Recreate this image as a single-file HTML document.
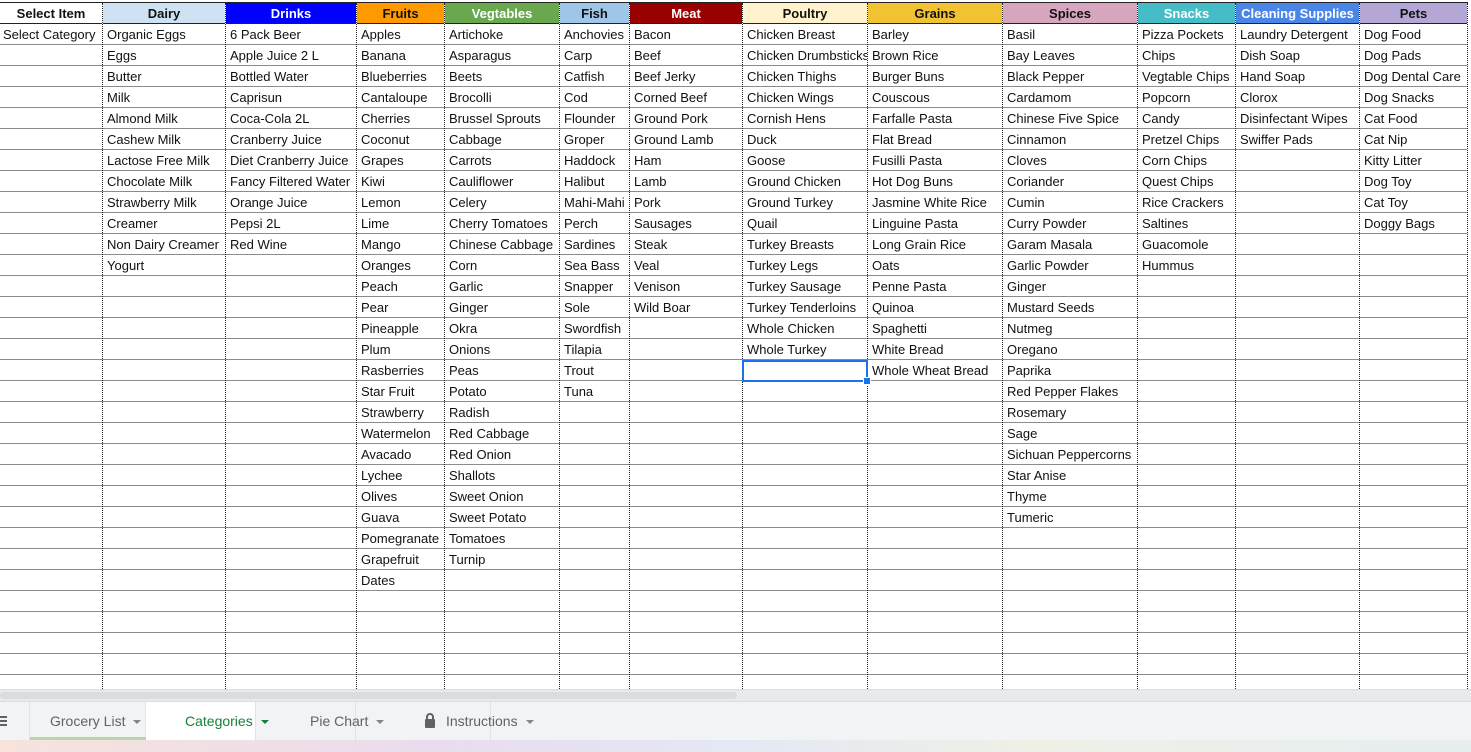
<!DOCTYPE html>
<html><head><meta charset="utf-8"><style>
*{margin:0;padding:0;box-sizing:border-box}
body{width:1471px;height:752px;overflow:hidden;background:#fff;font-family:"Liberation Sans",Arial,sans-serif;font-size:13px;color:#111;position:relative}
#grid{position:absolute;left:0;top:0;width:1471px;height:689px;overflow:hidden}
#rows{position:absolute;left:0;top:24px;width:1467px;height:665px;background:repeating-linear-gradient(to bottom,transparent 0 20px,#8c8c8c 20px 21px)}
.c{position:absolute;top:3px;height:686px;border-right:1px dotted #222;overflow:hidden}
.h{height:21px;line-height:21px;text-align:center;font-weight:bold;font-size:13px;border-bottom:1px solid #222}
.c div.t{height:21px;line-height:21px;padding-left:4px;white-space:nowrap;overflow:hidden}
#sel{position:absolute;left:742px;top:360px;width:126px;height:22px;border:2px solid #1a73e8}
#sel:after{content:"";position:absolute;right:-5px;bottom:-5px;width:6px;height:6px;background:#1a73e8;border:1px solid #fff}
#sb{position:absolute;left:0;top:689px;width:1471px;height:12px;background:#e8eaed;border-top:1px solid #dadce0}
#thumb{position:absolute;left:0;top:2px;width:737px;height:7px;background:#dadce0;border-radius:4px}
#tabs{position:absolute;left:0;top:701px;width:1471px;height:39px;background:#f1f3f4;border-top:1px solid #dadce0}
.tab{position:absolute;top:0;height:39px;line-height:38px;font-size:14px;color:#5f6368;border-right:1px solid #e3e3e3;white-space:nowrap}
.tab .ar{display:inline-block;width:0;height:0;border-left:4px solid transparent;border-right:4px solid transparent;border-top:4px solid #80868b;margin-left:8px;vertical-align:middle}
#bot{position:absolute;left:0;top:740px;width:1471px;height:12px;background:linear-gradient(90deg,#f7e3dc,#e9dcee 30%,#e4e8f4 50%,#eef0e6 70%,#e6eef0)}
</style></head><body>
<div id="grid"><div id="rows"></div>
<div class="c" style="left:0;width:103px"><div class="h">Select Item</div><div class="t" style="padding-left:3px">Select Category</div></div>
<div class="c" style="left:103px;width:123px"><div class="h" style="background:#cfe2f3">Dairy</div><div class="t">Organic Eggs</div><div class="t">Eggs</div><div class="t">Butter</div><div class="t">Milk</div><div class="t">Almond Milk</div><div class="t">Cashew Milk</div><div class="t">Lactose Free Milk</div><div class="t">Chocolate Milk</div><div class="t">Strawberry Milk</div><div class="t">Creamer</div><div class="t">Non Dairy Creamer</div><div class="t">Yogurt</div></div>
<div class="c" style="left:226px;width:131px"><div class="h" style="background:#0000ff;color:#fff">Drinks</div><div class="t">6 Pack Beer</div><div class="t">Apple Juice 2 L</div><div class="t">Bottled Water</div><div class="t">Caprisun</div><div class="t">Coca-Cola 2L</div><div class="t">Cranberry Juice</div><div class="t">Diet Cranberry Juice</div><div class="t">Fancy Filtered Water</div><div class="t">Orange Juice</div><div class="t">Pepsi 2L</div><div class="t">Red Wine</div></div>
<div class="c" style="left:357px;width:88px"><div class="h" style="background:#ff9900">Fruits</div><div class="t">Apples</div><div class="t">Banana</div><div class="t">Blueberries</div><div class="t">Cantaloupe</div><div class="t">Cherries</div><div class="t">Coconut</div><div class="t">Grapes</div><div class="t">Kiwi</div><div class="t">Lemon</div><div class="t">Lime</div><div class="t">Mango</div><div class="t">Oranges</div><div class="t">Peach</div><div class="t">Pear</div><div class="t">Pineapple</div><div class="t">Plum</div><div class="t">Rasberries</div><div class="t">Star Fruit</div><div class="t">Strawberry</div><div class="t">Watermelon</div><div class="t">Avacado</div><div class="t">Lychee</div><div class="t">Olives</div><div class="t">Guava</div><div class="t">Pomegranate</div><div class="t">Grapefruit</div><div class="t">Dates</div></div>
<div class="c" style="left:445px;width:115px"><div class="h" style="background:#6aa84f;color:#fff">Vegtables</div><div class="t">Artichoke</div><div class="t">Asparagus</div><div class="t">Beets</div><div class="t">Brocolli</div><div class="t">Brussel Sprouts</div><div class="t">Cabbage</div><div class="t">Carrots</div><div class="t">Cauliflower</div><div class="t">Celery</div><div class="t">Cherry Tomatoes</div><div class="t">Chinese Cabbage</div><div class="t">Corn</div><div class="t">Garlic</div><div class="t">Ginger</div><div class="t">Okra</div><div class="t">Onions</div><div class="t">Peas</div><div class="t">Potato</div><div class="t">Radish</div><div class="t">Red Cabbage</div><div class="t">Red Onion</div><div class="t">Shallots</div><div class="t">Sweet Onion</div><div class="t">Sweet Potato</div><div class="t">Tomatoes</div><div class="t">Turnip</div></div>
<div class="c" style="left:560px;width:70px"><div class="h" style="background:#9fc5e8">Fish</div><div class="t">Anchovies</div><div class="t">Carp</div><div class="t">Catfish</div><div class="t">Cod</div><div class="t">Flounder</div><div class="t">Groper</div><div class="t">Haddock</div><div class="t">Halibut</div><div class="t">Mahi-Mahi</div><div class="t">Perch</div><div class="t">Sardines</div><div class="t">Sea Bass</div><div class="t">Snapper</div><div class="t">Sole</div><div class="t">Swordfish</div><div class="t">Tilapia</div><div class="t">Trout</div><div class="t">Tuna</div></div>
<div class="c" style="left:630px;width:113px"><div class="h" style="background:#990000;color:#fff">Meat</div><div class="t">Bacon</div><div class="t">Beef</div><div class="t">Beef Jerky</div><div class="t">Corned Beef</div><div class="t">Ground Pork</div><div class="t">Ground Lamb</div><div class="t">Ham</div><div class="t">Lamb</div><div class="t">Pork</div><div class="t">Sausages</div><div class="t">Steak</div><div class="t">Veal</div><div class="t">Venison</div><div class="t">Wild Boar</div></div>
<div class="c" style="left:743px;width:125px"><div class="h" style="background:#fff2cc">Poultry</div><div class="t">Chicken Breast</div><div class="t">Chicken Drumbsticks</div><div class="t">Chicken Thighs</div><div class="t">Chicken Wings</div><div class="t">Cornish Hens</div><div class="t">Duck</div><div class="t">Goose</div><div class="t">Ground Chicken</div><div class="t">Ground Turkey</div><div class="t">Quail</div><div class="t">Turkey Breasts</div><div class="t">Turkey Legs</div><div class="t">Turkey Sausage</div><div class="t">Turkey Tenderloins</div><div class="t">Whole Chicken</div><div class="t">Whole Turkey</div></div>
<div class="c" style="left:868px;width:135px"><div class="h" style="background:#f1c232">Grains</div><div class="t">Barley</div><div class="t">Brown Rice</div><div class="t">Burger Buns</div><div class="t">Couscous</div><div class="t">Farfalle Pasta</div><div class="t">Flat Bread</div><div class="t">Fusilli Pasta</div><div class="t">Hot Dog Buns</div><div class="t">Jasmine White Rice</div><div class="t">Linguine Pasta</div><div class="t">Long Grain Rice</div><div class="t">Oats</div><div class="t">Penne Pasta</div><div class="t">Quinoa</div><div class="t">Spaghetti</div><div class="t">White Bread</div><div class="t">Whole Wheat Bread</div></div>
<div class="c" style="left:1003px;width:135px"><div class="h" style="background:#d5a6bd">Spices</div><div class="t">Basil</div><div class="t">Bay Leaves</div><div class="t">Black Pepper</div><div class="t">Cardamom</div><div class="t">Chinese Five Spice</div><div class="t">Cinnamon</div><div class="t">Cloves</div><div class="t">Coriander</div><div class="t">Cumin</div><div class="t">Curry Powder</div><div class="t">Garam Masala</div><div class="t">Garlic Powder</div><div class="t">Ginger</div><div class="t">Mustard Seeds</div><div class="t">Nutmeg</div><div class="t">Oregano</div><div class="t">Paprika</div><div class="t">Red Pepper Flakes</div><div class="t">Rosemary</div><div class="t">Sage</div><div class="t">Sichuan Peppercorns</div><div class="t">Star Anise</div><div class="t">Thyme</div><div class="t">Tumeric</div></div>
<div class="c" style="left:1138px;width:98px"><div class="h" style="background:#46bdc6;color:#fff">Snacks</div><div class="t">Pizza Pockets</div><div class="t">Chips</div><div class="t">Vegtable Chips</div><div class="t">Popcorn</div><div class="t">Candy</div><div class="t">Pretzel Chips</div><div class="t">Corn Chips</div><div class="t">Quest Chips</div><div class="t">Rice Crackers</div><div class="t">Saltines</div><div class="t">Guacomole</div><div class="t">Hummus</div></div>
<div class="c" style="left:1236px;width:124px"><div class="h" style="background:#4a86e8;color:#fff">Cleaning Supplies</div><div class="t">Laundry Detergent</div><div class="t">Dish Soap</div><div class="t">Hand Soap</div><div class="t">Clorox</div><div class="t">Disinfectant Wipes</div><div class="t">Swiffer Pads</div></div>
<div class="c" style="left:1360px;width:108px"><div class="h" style="background:#b4a7d6">Pets</div><div class="t">Dog Food</div><div class="t">Dog Pads</div><div class="t">Dog Dental Care</div><div class="t">Dog Snacks</div><div class="t">Cat Food</div><div class="t">Cat Nip</div><div class="t">Kitty Litter</div><div class="t">Dog Toy</div><div class="t">Cat Toy</div><div class="t">Doggy Bags</div></div>
<div style="position:absolute;left:0;top:2px;width:1468px;height:1px;background:#222"></div>
<div style="position:absolute;left:1468px;top:0;width:3px;height:689px;background:#fff"></div>
<div id="sel"></div>
</div>
<div id="sb"><div id="thumb"></div></div>
<div id="tabs">
<div style="position:absolute;left:0;top:14px;width:7px;height:10px;background:repeating-linear-gradient(#5f6368 0 2px,transparent 2px 4px)"></div>
<div class="tab" style="left:29px;width:117px;padding-left:20px;border-left:1px solid #e3e3e3">Grocery List<span class="ar"></span><div style="position:absolute;left:0;bottom:0;width:116px;height:4px;background:#b7d7a8"></div></div>
<div class="tab" style="left:146px;width:110px;background:#fff;color:#188038;padding-left:39px">Categories<span class="ar" style="border-top-color:#188038"></span></div>
<div class="tab" style="left:256px;width:100px;padding-left:54px">Pie Chart<span class="ar"></span></div>
<div class="tab" style="left:356px;width:135px;padding-left:90px">
<svg style="position:absolute;left:68px;top:11px" width="12" height="15" viewBox="0 0 12 15"><path d="M3 6V4a3 3 0 0 1 6 0v2" fill="none" stroke="#5f6368" stroke-width="2"/><rect x="1" y="6" width="10" height="9" rx="1" fill="#5f6368"/></svg>Instructions<span class="ar"></span></div>
</div>
<div id="bot"></div>
</body></html>
